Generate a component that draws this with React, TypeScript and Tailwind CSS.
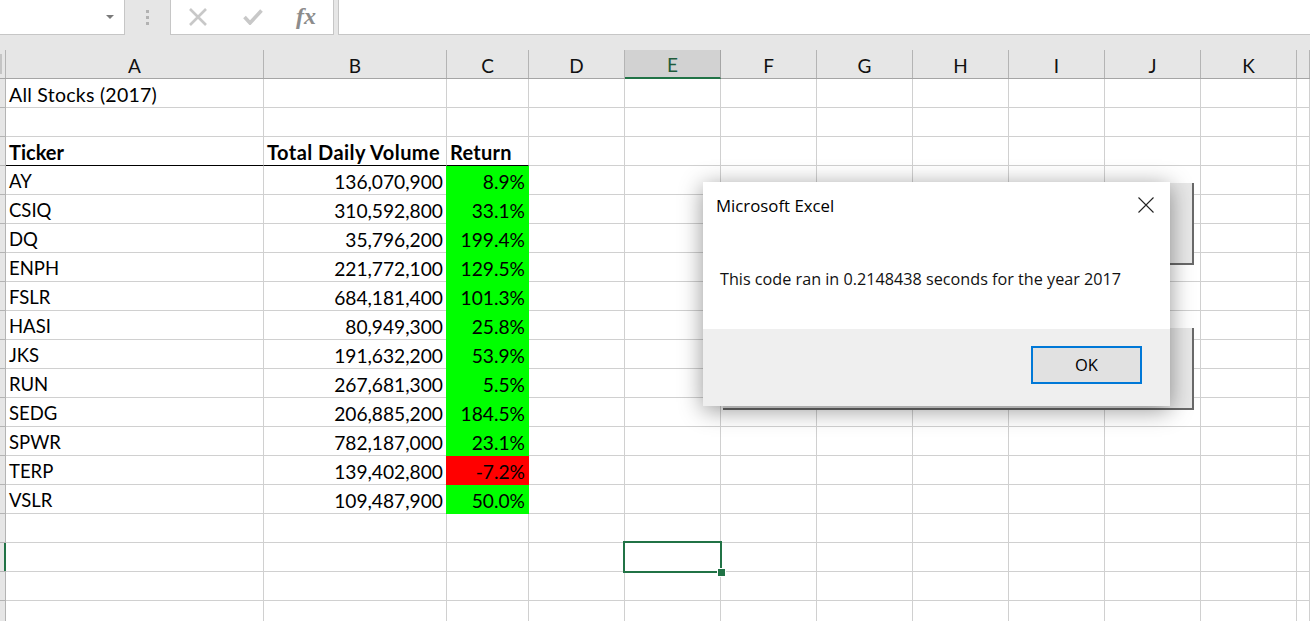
const cellFont = { fontFamily: '"Lato", "Liberation Sans", sans-serif' };

const columns = [
  { name: "A", cls: "w-[258px]" },
  { name: "B", cls: "w-[183px]" },
  { name: "C", cls: "w-[82px]" },
  { name: "D", cls: "w-[96px]" },
  { name: "E", cls: "w-[96px]" },
  { name: "F", cls: "w-[96px]" },
  { name: "G", cls: "w-[96px]" },
  { name: "H", cls: "w-[96px]" },
  { name: "I", cls: "w-[96px]" },
  { name: "J", cls: "w-[96px]" },
  { name: "K", cls: "w-[96px]" },
  { name: "", cls: "flex-1" },
];

const stocks = [
  ["AY", "136,070,900", "8.9%"],
  ["CSIQ", "310,592,800", "33.1%"],
  ["DQ", "35,796,200", "199.4%"],
  ["ENPH", "221,772,100", "129.5%"],
  ["FSLR", "684,181,400", "101.3%"],
  ["HASI", "80,949,300", "25.8%"],
  ["JKS", "191,632,200", "53.9%"],
  ["RUN", "267,681,300", "5.5%"],
  ["SEDG", "206,885,200", "184.5%"],
  ["SPWR", "782,187,000", "23.1%"],
  ["TERP", "139,402,800", "-7.2%"],
  ["VSLR", "109,487,900", "50.0%"],
];

const Cell = ({ width, children, className = "" }: { width: string; children?: React.ReactNode; className?: string }) => (
  <div className={`${width} h-full shrink-0 border-r border-b border-[#d0d0d0] overflow-visible whitespace-nowrap ${className}`}>
    {children}
  </div>
);

const Row = ({ active = false, children }: { active?: boolean; children: React.ReactNode }) => (
  <div className="flex h-[29px]">
    <div className="w-[6px] h-full shrink-0 bg-[#e6e6e6] border-r border-b border-[#b4b4b4] relative">
      {active && <div className="absolute right-[-1px] top-0 bottom-0 w-[2px] bg-[#217346]" />}
    </div>
    {children}
  </div>
);

const BlankCells = ({ from }: { from: number }) => (
  <>
    {columns.slice(from).map((c, i) => (
      <Cell key={i} width={c.cls} />
    ))}
  </>
);

const TopBar = () => (
  <div className="h-[50px] bg-[#e6e6e6] flex items-start">
    <div className="w-[125px] h-[35px] bg-white border-r border-b border-[#c6c6c6] flex items-center justify-end pr-[10px]">
      <div className="w-0 h-0 border-x-[4px] border-x-transparent border-t-[4px] border-t-[#7a7a7a]" />
    </div>
    <div className="w-[45px] h-[35px] flex flex-col items-center justify-center gap-[3px]">
      <div className="w-[3px] h-[3px] bg-[#b2b2b2]" />
      <div className="w-[3px] h-[3px] bg-[#b2b2b2]" />
      <div className="w-[3px] h-[3px] bg-[#b2b2b2]" />
    </div>
    <div className="w-[164px] h-[35px] bg-white border-x border-b border-[#c6c6c6] flex items-center">
      <svg width="18" height="18" viewBox="0 0 18 18" className="ml-[18px]">
        <path d="M1 1 L17 17 M17 1 L1 17" stroke="#c8c8c8" strokeWidth="2.6" fill="none" />
      </svg>
      <svg width="20" height="16" viewBox="0 0 20 16" className="ml-[36px]">
        <path d="M1.5 8 L7 14 L18.5 1.5" stroke="#c8c8c8" strokeWidth="3.6" fill="none" />
      </svg>
      <span
        className="ml-[33px] -mt-[2px] text-[24px] italic font-bold text-[#8c8c8c] leading-none"
        style={{ fontFamily: '"Liberation Serif", serif' }}
      >
        fx
      </span>
    </div>
    <div className="w-[4px]" />
    <div className="flex-1 h-[35px] bg-white border-l border-b border-[#c6c6c6]" />
  </div>
);

const ColumnHeaders = () => (
  <div className="flex h-[29px] bg-[#e6e6e6] border-b border-[#a5a5a5]">
    <div className="w-[6px] h-full shrink-0 border-r border-[#b4b4b4] flex items-center">
      <div className="w-[2px] h-[20px] bg-[#c4c4c4]" />
    </div>
    {columns.map((c) =>
      c.name === "E" ? (
        <div
          key={c.name}
          className={`${c.cls} h-[29px] shrink-0 bg-[#d2d2d2] border-r border-[#a5a5a5] border-b-[2px] border-b-[#217346] flex items-center justify-center pt-[4px] text-[19px] text-[#1f5c3c]`}
        >
          {c.name}
        </div>
      ) : (
        <div
          key={c.name || "rest"}
          className={`${c.cls} h-full shrink-0 border-r border-[#b4b4b4] flex items-center justify-center pt-[5px] text-[19px] text-[#111]`}
        >
          {c.name}
        </div>
      ),
    )}
  </div>
);

const Dialog = () => (
  <div
    className="absolute left-[703px] top-[182px] w-[467px] h-[224px] bg-white flex flex-col shadow-[0_4px_22px_rgba(0,0,0,0.42)]"
    style={{ fontFamily: '"Open Sans", "Noto Sans", sans-serif' }}
  >
    <div className="h-[147px] px-[13px] flex flex-col">
      <div className="flex items-center justify-between h-[48px] pr-[3px]">
        <span className="text-[16.8px] text-black">Microsoft Excel</span>
        <svg width="16" height="16" viewBox="0 0 16 16" className="-mt-[2px]">
          <path d="M0.5 0.5 L15.5 15.5 M15.5 0.5 L0.5 15.5" stroke="#222" strokeWidth="1.1" fill="none" />
        </svg>
      </div>
      <div className="mt-[37px] ml-[4px] text-[16.2px] text-[#111] whitespace-nowrap">
        This code ran in 0.2148438 seconds for the year 2017
      </div>
    </div>
    <div className="flex-1 bg-[#efefef] flex justify-end items-start pt-[17px] pr-[28px]">
      <button className="w-[111px] h-[38px] bg-[#e1e1e1] border-2 border-[#0078d7] text-[16.5px] text-black">OK</button>
    </div>
  </div>
);

export default function App() {
  return (
    <div className="w-[1310px] h-[621px] overflow-hidden bg-white relative" style={cellFont}>
      <TopBar />
      <ColumnHeaders />

      <Row>
        <Cell width={columns[0].cls} className="pl-[3px] text-[19.5px] tracking-[0.25px] leading-[31px] text-black">
          All Stocks (2017)
        </Cell>
        <BlankCells from={1} />
      </Row>
      <Row>
        <BlankCells from={0} />
      </Row>
      <Row>
        <Cell width={columns[0].cls} className="pl-[3px] text-[20px] font-bold leading-[31px] text-black border-b-black">
          Ticker
        </Cell>
        <Cell width={columns[1].cls} className="pl-[3px] text-[20px] font-bold tracking-[0.45px] leading-[31px] text-black border-b-black">
          Total Daily Volume
        </Cell>
        <Cell width={columns[2].cls} className="pl-[3px] text-[20px] font-bold tracking-[0.25px] leading-[31px] text-black border-b-black">
          Return
        </Cell>
        <BlankCells from={3} />
      </Row>

      {stocks.map(([ticker, volume, ret]) => (
        <Row key={ticker}>
          <Cell width={columns[0].cls} className="pl-[3px] text-[18.5px] leading-[31px] text-black">
            {ticker}
          </Cell>
          <Cell width={columns[1].cls} className="pr-[3px] text-right text-[19.2px] leading-[31px] text-black">
            {volume}
          </Cell>
          <div
            className={`${columns[2].cls} h-full shrink-0 relative pr-[4px] text-right text-[19.2px] leading-[31px] text-black`}
          >
            {/* the fill covers the gridline to the left of the cell */}
            <div className={`absolute -left-[1px] right-0 top-0 bottom-0 ${ret.startsWith("-") ? "bg-[#ff0000]" : "bg-[#00ff00]"}`} />
            <span className="relative">{ret}</span>
          </div>
          <BlankCells from={3} />
        </Row>
      ))}

      <Row>
        <BlankCells from={0} />
      </Row>
      <Row active>
        <BlankCells from={0} />
      </Row>
      <Row>
        <BlankCells from={0} />
      </Row>
      <Row>
        <BlankCells from={0} />
      </Row>

      {/* selected cell E17 */}
      <div className="absolute left-[623px] top-[541px] w-[99px] h-[32px] border-2 border-[#217346]">
        <div className="absolute right-[-5px] bottom-[-5px] w-[7px] h-[7px] bg-[#217346] outline outline-1 outline-white" />
      </div>

      {/* macro buttons behind the message box */}
      <div className="absolute left-[723px] top-[183px] w-[471px] h-[82px] bg-[#e8e8e8] border-r-2 border-b-2 border-[#696969]" />
      <div className="absolute left-[723px] top-[328px] w-[471px] h-[82px] bg-[#e8e8e8] border-r-2 border-b-2 border-[#696969]" />

      <Dialog />
    </div>
  );
}
